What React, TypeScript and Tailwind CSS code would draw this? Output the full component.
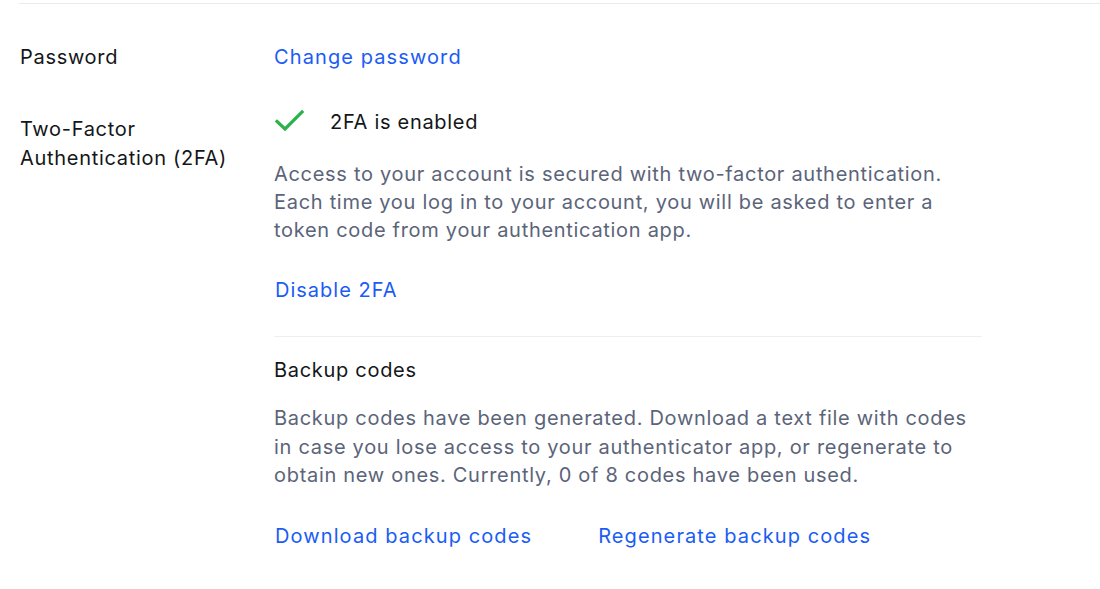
import React from 'react';

const font = { fontFamily: 'Inter, "Noto Sans", sans-serif' };

function CheckIcon() {
  return (
    <svg width="32" height="26" viewBox="0 0 32 26" fill="none" className="shrink-0">
      <path d="M3 12.5 L11 20 L28 3" stroke="#2ab24b" strokeWidth="3.2" strokeLinecap="square" strokeLinejoin="miter" />
    </svg>
  );
}

export default function App() {
  return (
    <div className="bg-white w-[1100px] h-[589px] overflow-hidden text-[20px] leading-[28px] tracking-[0.7px] text-[#141618]" style={font}>
      <div className="ml-[19px] mt-[3px] border-t border-[#e9eaec]" />

      {/* Password row */}
      <div className="flex pl-[20px] pt-[39px]">
        <div className="w-[254px] shrink-0">Password</div>
        <a className="text-[#1a5cf4] tracking-[1.1px] cursor-pointer">Change password</a>
      </div>

      {/* 2FA row */}
      <div className="flex pl-[20px] mt-[37px]">
        <div className="w-[254px] shrink-0 pt-[7px] leading-[29px]">
          Two-Factor
          <br />
          Authentication (2FA)
        </div>
        <div className="w-[708px]">
          <div className="flex items-center gap-[24px]">
            <CheckIcon />
            <span>2FA is enabled</span>
          </div>
          <p className="mt-[24px] text-[#5b6479]">
            Access to your account is secured with two-factor authentication. Each time you log in to your account, you will be asked to enter a token code from your authentication app.
          </p>
          <a className="block mt-[32px] pl-px text-[#1a5cf4] tracking-[1px] cursor-pointer">Disable 2FA</a>

          <div className="mt-[32px] border-t border-[#eceef0]" />

          <div className="mt-[19px]">Backup codes</div>
          <p className="mt-[20px] text-[#5b6479] leading-[28.5px]">
            Backup codes have been generated. Download a text file with codes in case you lose access to your authenticator app, or regenerate to obtain new ones. Currently, 0 of 8 codes have been used.
          </p>
          <div className="flex gap-[66px] mt-[32px] pl-px text-[#1a5cf4] tracking-[1.1px]">
            <a className="cursor-pointer">Download backup codes</a>
            <a className="cursor-pointer">Regenerate backup codes</a>
          </div>
        </div>
      </div>
    </div>
  );
}
